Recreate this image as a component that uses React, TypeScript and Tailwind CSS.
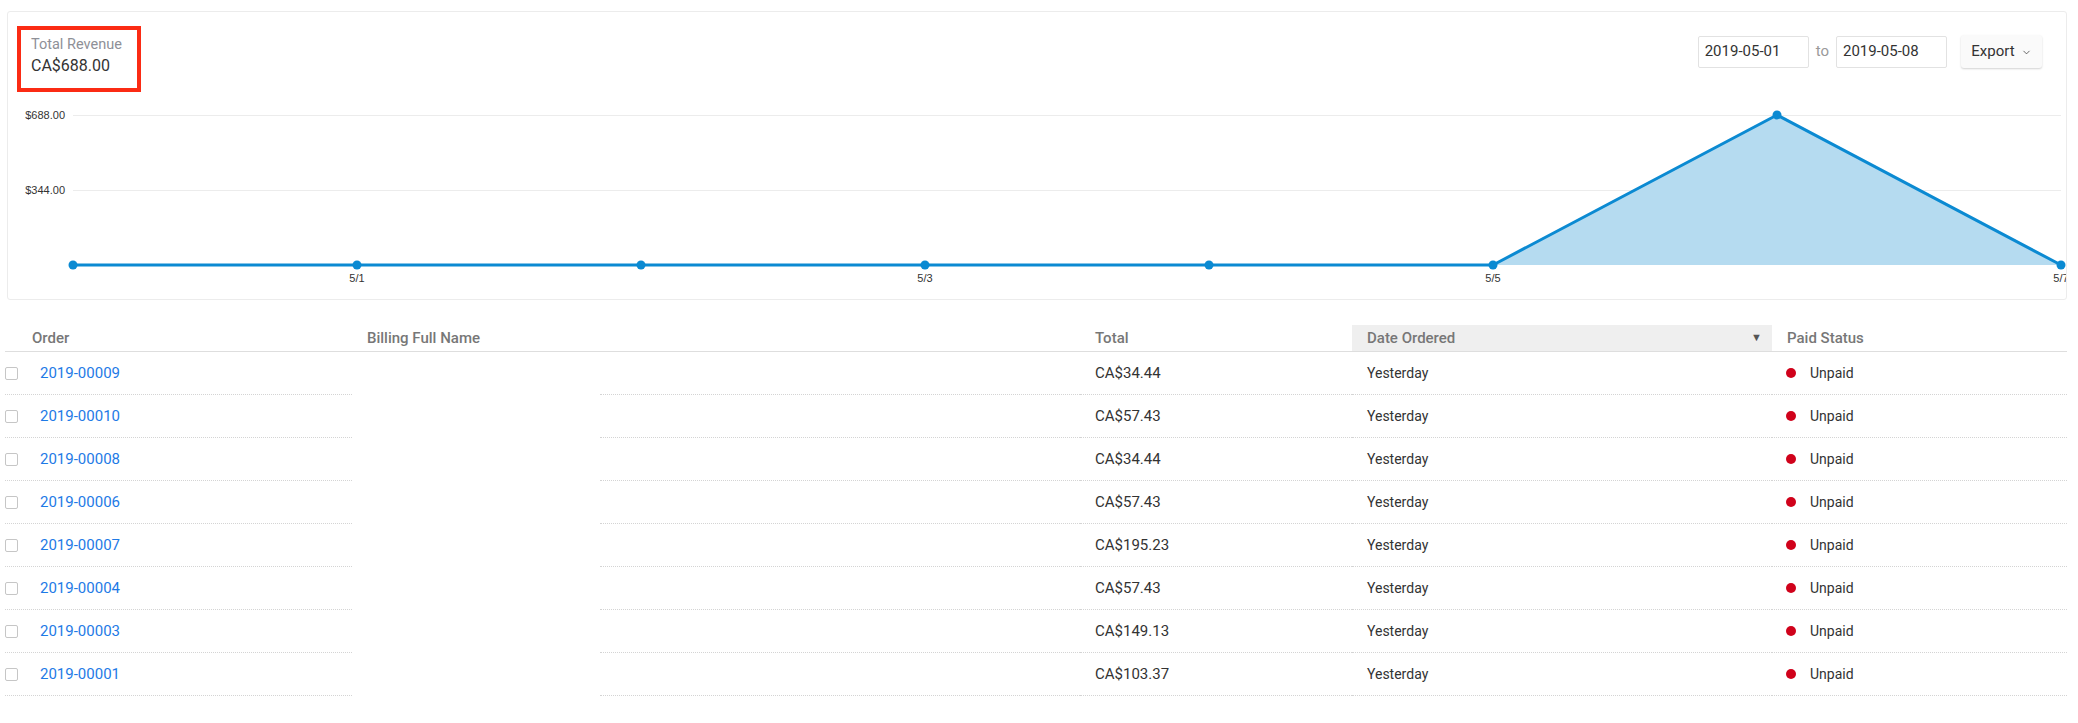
import { ChevronDown } from "lucide-react";

type Order = {
  id: string;
  total: string;
  date: string;
  status: string;
};

const orders: Order[] = [
  { id: "2019-00009", total: "CA$34.44", date: "Yesterday", status: "Unpaid" },
  { id: "2019-00010", total: "CA$57.43", date: "Yesterday", status: "Unpaid" },
  { id: "2019-00008", total: "CA$34.44", date: "Yesterday", status: "Unpaid" },
  { id: "2019-00006", total: "CA$57.43", date: "Yesterday", status: "Unpaid" },
  { id: "2019-00007", total: "CA$195.23", date: "Yesterday", status: "Unpaid" },
  { id: "2019-00004", total: "CA$57.43", date: "Yesterday", status: "Unpaid" },
  { id: "2019-00003", total: "CA$149.13", date: "Yesterday", status: "Unpaid" },
  { id: "2019-00001", total: "CA$103.37", date: "Yesterday", status: "Unpaid" },
];

const values = [0, 0, 0, 0, 0, 0, 688, 0];
const MAX = 688;
const BASE = 165;
const H = 150;
const X0 = 65;
const STEP = 284;

function RevenueChart() {
  const pts = values.map((v, i) => [X0 + i * STEP, BASE - (v / MAX) * H]);
  const line = pts.map(([x, y]) => `${x},${y}`).join(" ");
  const area = `${X0},${BASE} ${line} ${pts[pts.length - 1][0]},${BASE}`;
  const labels = ["5/1", "5/3", "5/5", "5/7"];

  return (
    <svg width={2058} height={190} className="block overflow-hidden">
      <line x1={X0} x2={2053} y1={15.5} y2={15.5} stroke="#ececec" strokeWidth={1} />
      <line x1={X0} x2={2053} y1={90.5} y2={90.5} stroke="#ececec" strokeWidth={1} />
      <g fontFamily="'Liberation Sans', Arial, sans-serif" fontSize={11} fill="#333">
        <text x={57} y={16} textAnchor="end" dominantBaseline="middle">
          $688.00
        </text>
        <text x={57} y={91} textAnchor="end" dominantBaseline="middle">
          $344.00
        </text>
        {labels.map((l, i) => (
          <text
            key={l}
            x={X0 + (i * 2 + 1) * STEP}
            y={179}
            textAnchor="middle"
            dominantBaseline="middle"
          >
            {l}
          </text>
        ))}
      </g>
      <polygon points={area} fill="#b5dbf0" />
      <polyline
        points={line}
        fill="none"
        stroke="#0b8ad2"
        strokeWidth={3}
        strokeLinejoin="round"
      />
      {pts.map(([x, y], i) => (
        <circle key={i} cx={x} cy={y} r={4.5} fill="#0b8ad2" />
      ))}
    </svg>
  );
}

function DateBox({ value }: { value: string }) {
  return (
    <div className="flex h-[32px] w-[111px] items-center rounded-[2px] border border-[#e2e2e2] bg-white pl-[6px] text-[15px] text-[#333]">
      {value}
    </div>
  );
}

function RevenuePanel() {
  return (
    <div className="ml-[7px] mt-[11px] flex h-[289px] w-[2060px] flex-col rounded-[3px] border border-[#ececec]">
      <div className="flex items-start justify-between pl-[9px] pr-[24px] pt-[14px]">
        <div className="h-[66px] w-[124px] border-4 border-[#fb2b14] px-[10px] pt-[6px]">
          <div className="text-[14.5px] leading-[18px] text-[#8e9097]">Total Revenue</div>
          <div className="mt-[1px] text-[16px] leading-[22px] text-[#333]">CA$688.00</div>
        </div>
        <div className="mt-[9px] flex items-center">
          <DateBox value="2019-05-01" />
          <span className="mx-[7px] text-[15px] text-[#9a9a9a]">to</span>
          <DateBox value="2019-05-08" />
          <button className="ml-[14px] flex h-[33px] w-[81px] items-center justify-center gap-[6px] rounded-[3px] bg-[#fafafa] text-[15px] text-[#333] shadow-[0_1px_2px_rgba(0,0,0,0.18)]">
            Export
            <ChevronDown size={11} strokeWidth={1.6} className="mt-[2px]" />
          </button>
        </div>
      </div>
      <div className="mt-[8px]">
        <RevenueChart />
      </div>
    </div>
  );
}

const cols = "grid grid-cols-[347px_728px_272px_420px_295px]";

function OrdersTable() {
  return (
    <div className="ml-[5px] mt-[25px] w-[2062px]">
      <div className={`${cols} h-[27px] border-b border-[#dedede] text-[15px] font-medium text-[#777]`}>
        <div className="flex h-[26px] items-center pl-[27px]">Order</div>
        <div className="flex h-[26px] items-center pl-[15px]">Billing Full Name</div>
        <div className="flex h-[26px] items-center pl-[15px]">Total</div>
        <div className="flex h-[26px] items-center justify-between bg-[#efefef] pl-[15px] pr-[10px]">
          <span>Date Ordered</span>
          <span className="text-[11px] text-[#555]">▼</span>
        </div>
        <div className="flex h-[26px] items-center pl-[15px]">Paid Status</div>
      </div>
      {orders.map((o) => (
        <div key={o.id} className={`${cols} h-[43px] text-[#333]`}>
          <div className="flex items-center border-b border-dotted border-[#d4d4d4]">
            <span className="h-[13px] w-[13px] rounded-[2px] border border-[#c6c6c6] bg-white" />
            <a className="ml-[22px] text-[15px] text-[#1e7ae6]">{o.id}</a>
          </div>
          <div className="flex flex-col">
            <div className="h-[42px]" />
            <div className="ml-[248px] border-t border-dotted border-[#d4d4d4]" />
          </div>
          <div className="flex items-center border-b border-dotted border-[#d4d4d4] pl-[15px] text-[15px]">
            {o.total}
          </div>
          <div className="flex items-center border-b border-dotted border-[#d4d4d4] pl-[15px] text-[14px]">
            {o.date}
          </div>
          <div className="flex items-center border-b border-dotted border-[#d4d4d4] pl-[14px] text-[14px]">
            <span className="h-[10px] w-[10px] rounded-full bg-[#d0021b]" />
            <span className="ml-[14px]">{o.status}</span>
          </div>
        </div>
      ))}
    </div>
  );
}

export default function App() {
  return (
    <div className="h-[723px] w-[2078px] overflow-hidden bg-white font-['Roboto',sans-serif]">
      <RevenuePanel />
      <OrdersTable />
    </div>
  );
}
